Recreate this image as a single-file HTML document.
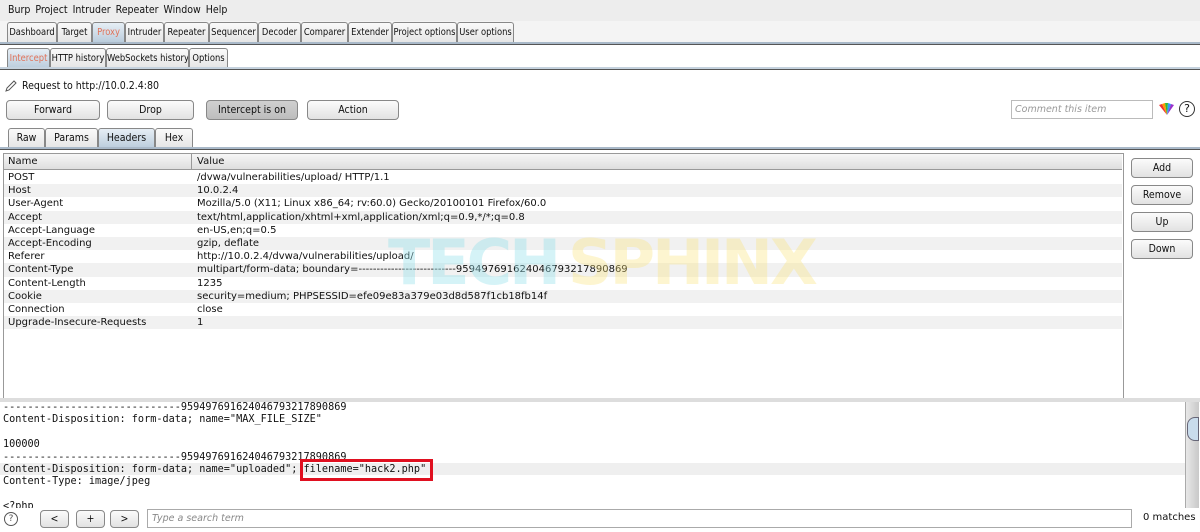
<!DOCTYPE html>
<html><head><meta charset="utf-8"><style>
*{box-sizing:border-box;margin:0;padding:0}
body{width:1200px;height:532px;overflow:hidden;background:#fff;font-family:"DejaVu Sans","Liberation Sans",sans-serif;font-size:10px;color:#111;position:relative}
.a{position:absolute;white-space:nowrap}
.c{font-family:"DejaVu Sans Condensed","Liberation Sans Narrow","Liberation Sans",sans-serif}
.tab{position:absolute;height:21px;border:1px solid #888;border-bottom:none;border-radius:3px 3px 0 0;background:linear-gradient(#fafafa,#e4e4e4);text-align:center;line-height:19px;font-size:9.3px;white-space:nowrap;overflow:hidden;font-family:"DejaVu Sans Condensed","Liberation Sans Narrow","Liberation Sans",sans-serif}
.sel{background:linear-gradient(#e6eef5,#b9cbdb);color:#e0735a}
.btn{position:absolute;height:20px;border:1px solid #888;border-radius:4px;background:linear-gradient(#fbfbfb,#e2e2e2);text-align:center;line-height:18px;font-size:10.5px;white-space:nowrap;font-family:"DejaVu Sans Condensed","Liberation Sans",sans-serif}
.line{position:absolute;left:0;width:1200px;height:3px;background:#a9b9c9;border-bottom:1px solid #555}
.row{position:absolute;left:4px;width:1118px;height:13.2px;line-height:13.2px;white-space:nowrap}
.row span{position:absolute;left:4px}.row b{font-weight:normal;position:absolute;left:193px}
.g{background:#f1f1f1}
.mono{position:absolute;left:3px;font-family:"DejaVu Sans Mono","Liberation Mono",monospace;font-size:10.2px;white-space:pre;line-height:12.4px}
</style></head><body>
<div class="a" style="left:0;top:0;width:1200px;height:21px;background:#ededed"></div>
<div class="a c" style="left:8px;top:4px;font-size:10.5px;word-spacing:2px">Burp&nbsp;Project&nbsp;Intruder&nbsp;Repeater&nbsp;Window&nbsp;Help</div>
<div class="a" style="left:0;top:21px;width:1200px;height:22px;background:#f4f4f4"></div>
<div class="tab" style="left:7px;top:22px;width:50px">Dashboard</div>
<div class="tab" style="left:57px;top:22px;width:35px">Target</div>
<div class="tab sel" style="left:92px;top:22px;width:33px">Proxy</div>
<div class="tab" style="left:125px;top:22px;width:39px">Intruder</div>
<div class="tab" style="left:164px;top:22px;width:45px">Repeater</div>
<div class="tab" style="left:209px;top:22px;width:49px">Sequencer</div>
<div class="tab" style="left:258px;top:22px;width:43px">Decoder</div>
<div class="tab" style="left:301px;top:22px;width:47px">Comparer</div>
<div class="tab" style="left:348px;top:22px;width:44px">Extender</div>
<div class="tab" style="left:392px;top:22px;width:65px">Project options</div>
<div class="tab" style="left:457px;top:22px;width:57px">User options</div>
<div class="line" style="top:42px"></div>
<div class="tab sel" style="left:7px;top:48px;width:43px">Intercept</div>
<div class="tab" style="left:50px;top:48px;width:56px">HTTP history</div>
<div class="tab" style="left:106px;top:48px;width:83px">WebSockets history</div>
<div class="tab" style="left:189px;top:48px;width:39px">Options</div>
<div class="line" style="top:67px;background:#c5d2de"></div>
<svg class="a" style="left:5px;top:80px" width="12" height="12"><path d="M1 11 L2 8 L9 1 L11 3 L4 10 Z" fill="none" stroke="#555" stroke-width="1"/></svg>
<div class="a c" style="left:22px;top:80px;font-size:10.5px">Request to http://10.0.2.4:80</div>
<div class="btn" style="left:6px;top:100px;width:94px">Forward</div>
<div class="btn" style="left:107px;top:100px;width:87px">Drop</div>
<div class="btn" style="left:206px;top:100px;width:92px;background:linear-gradient(#d0d0d0,#bdbdbd)">Intercept is on</div>
<div class="btn" style="left:307px;top:100px;width:92px">Action</div>
<div class="a" style="left:1011px;top:100px;width:142px;height:19px;border:1px solid #bbb;color:#999;font-style:italic;padding:3px 3px;font-size:9.5px">Comment this item</div>
<svg class="a" style="left:1158px;top:102px" width="18" height="14"><path d="M9 13 L1 3 L4 2Z" fill="#e33"/><path d="M9 13 L4 2 L7 1Z" fill="#f90"/><path d="M9 13 L7 1 L10 1Z" fill="#3b3"/><path d="M9 13 L10 1 L13 2Z" fill="#39f"/><path d="M9 13 L13 2 L16 3Z" fill="#93c"/></svg>
<div class="a" style="left:1179px;top:101px;width:16px;height:16px;border:1px solid #333;border-radius:50%;text-align:center;line-height:14px;font-size:11px">?</div>
<div class="tab" style="left:8px;top:128px;width:37px;font-size:10.5px">Raw</div>
<div class="tab" style="left:45px;top:128px;width:53px;font-size:10.5px">Params</div>
<div class="tab sel" style="left:98px;top:128px;width:57px;color:#111;font-size:10.5px">Headers</div>
<div class="tab" style="left:155px;top:128px;width:38px;font-size:10.5px">Hex</div>
<div class="line" style="top:147px;height:3px"></div>
<div class="a" style="left:3px;top:153px;width:1121px;height:246px;border:1px solid #999"></div>
<div class="a" style="left:4px;top:154px;width:1118px;height:16px;background:linear-gradient(#f6f6f6,#dedede);border-bottom:1px solid #999"></div>
<div class="a" style="left:191px;top:154px;width:1px;height:16px;background:#999"></div>
<div class="a" style="left:8px;top:156px">Name</div><div class="a" style="left:197px;top:156px">Value</div>
<div class="row" style="top:171px"><span>POST</span><b>/dvwa/vulnerabilities/upload/ HTTP/1.1</b></div>
<div class="row g" style="top:184.2px"><span>Host</span><b>10.0.2.4</b></div>
<div class="row" style="top:197.4px"><span>User-Agent</span><b>Mozilla/5.0 (X11; Linux x86_64; rv:60.0) Gecko/20100101 Firefox/60.0</b></div>
<div class="row g" style="top:210.6px"><span>Accept</span><b>text/html,application/xhtml+xml,application/xml;q=0.9,*/*;q=0.8</b></div>
<div class="row" style="top:223.8px"><span>Accept-Language</span><b>en-US,en;q=0.5</b></div>
<div class="row g" style="top:237px"><span>Accept-Encoding</span><b>gzip, deflate</b></div>
<div class="row" style="top:250.2px"><span>Referer</span><b>http://10.0.2.4/dvwa/vulnerabilities/upload/</b></div>
<div class="row g" style="top:263.4px"><span>Content-Type</span><b>multipart/form-data; boundary=---------------------------959497691624046793217890869</b></div>
<div class="row" style="top:276.6px"><span>Content-Length</span><b>1235</b></div>
<div class="row g" style="top:289.8px"><span>Cookie</span><b>security=medium; PHPSESSID=efe09e83a379e03d8d587f1cb18fb14f</b></div>
<div class="row" style="top:303px"><span>Connection</span><b>close</b></div>
<div class="row g" style="top:316.2px"><span>Upgrade-Insecure-Requests</span><b>1</b></div>
<div class="a" style="left:388px;top:226px;font:bold 62px 'DejaVu Sans',sans-serif;color:rgba(150,225,235,.4);letter-spacing:-3px">TECH</div>
<div class="a" style="left:568px;top:226px;font:bold 62px 'DejaVu Sans',sans-serif;color:rgba(250,225,120,.35);letter-spacing:-3px">SPHINX</div>
<div class="btn" style="left:1131px;top:158px;width:62px">Add</div>
<div class="btn" style="left:1131px;top:185px;width:62px">Remove</div>
<div class="btn" style="left:1131px;top:212px;width:62px">Up</div>
<div class="btn" style="left:1131px;top:239px;width:62px">Down</div>
<div class="a" style="left:0;top:398px;width:1200px;height:4px;background:#ddd"></div>
<div class="a" style="left:0;top:463px;width:1185px;height:12px;background:#efefef"></div>
<div class="mono" style="top:402px">-----------------------------959497691624046793217890869
Content-Disposition: form-data; name="MAX_FILE_SIZE"

100000
-----------------------------959497691624046793217890869
Content-Disposition: form-data; name="uploaded"; filename="hack2.php"
Content-Type: image/jpeg

&lt;?php</div>
<div class="a" style="left:300px;top:459px;width:133px;height:22px;border:3px solid #e01020"></div>
<div class="a" style="left:1185px;top:402px;width:14px;height:106px;background:linear-gradient(90deg,#e8e8e8,#c8c8c8);border-left:1px solid #aaa"></div>
<div class="a" style="left:1187px;top:417px;width:12px;height:24px;border-radius:8px 0 0 8px;background:#c9dcec;border:1px solid #667"></div>
<div class="a" style="left:0;top:508px;width:1200px;height:24px;background:#fff"></div>
<div class="a" style="left:4px;top:512px;width:14px;height:14px;border:1px solid #555;border-radius:50%;font-size:9px;text-align:center;line-height:12px;color:#555">?</div>
<div class="btn" style="left:40px;top:510px;width:29px;height:18px;line-height:16px">&lt;</div>
<div class="btn" style="left:76px;top:510px;width:29px;height:18px;line-height:16px">+</div>
<div class="btn" style="left:110px;top:510px;width:29px;height:18px;line-height:16px">&gt;</div>
<div class="a" style="left:147px;top:509px;width:985px;height:19px;border:1px solid #aaa;color:#888;font-style:italic;padding:3px 4px;font-size:9.5px">Type a search term</div>
<div class="a" style="left:1143px;top:512px">0 matches</div>
</body></html>
